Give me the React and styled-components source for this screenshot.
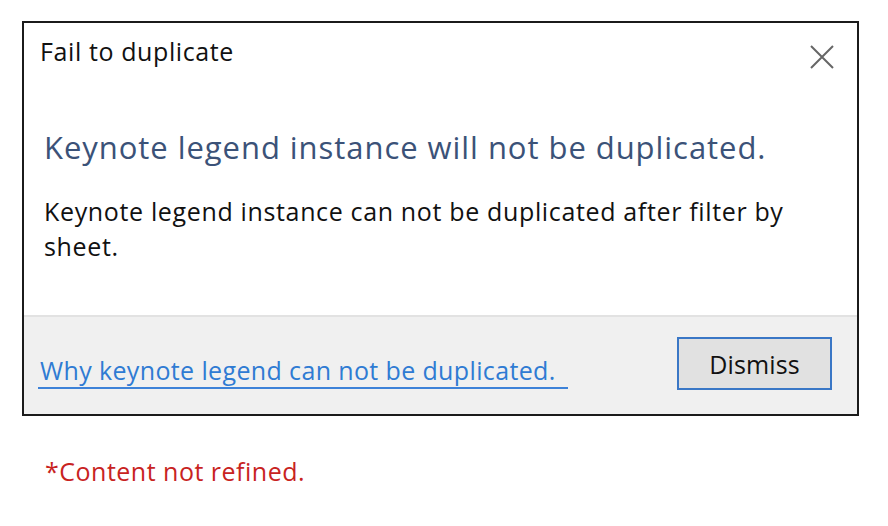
import React from "react";
import styled, { createGlobalStyle } from "styled-components";

const GlobalStyle = createGlobalStyle`
  html, body {
    margin: 0;
    padding: 0;
    background: #ffffff;
  }
  body {
    font-family: "Open Sans", "Noto Sans", "Liberation Sans", sans-serif;
  }
`;

const Page = styled.div`
  padding: 21px 0 0 22px;
  width: 888px;
  height: 526px;
  box-sizing: border-box;
`;

const Dialog = styled.div`
  width: 837px;
  height: 395px;
  box-sizing: border-box;
  border: 2px solid #1b1b1b;
  display: flex;
  flex-direction: column;
  background: #ffffff;
`;

const Header = styled.div`
  display: flex;
  align-items: flex-start;
  justify-content: space-between;
  padding: 11px 22px 0 16px;
  height: 60px;
  box-sizing: border-box;
`;

const HeaderTitle = styled.div`
  font-size: 25px;
  letter-spacing: 0.6px;
  color: #111;
  line-height: 34px;
`;

const CloseButton = styled.button`
  border: none;
  background: transparent;
  padding: 0;
  margin-top: 10px;
  width: 26px;
  height: 26px;
  cursor: pointer;
  display: flex;
  align-items: center;
  justify-content: center;
`;

const Body = styled.div`
  flex: 1;
  padding: 44px 30px 0 20px;
`;

const Headline = styled.h2`
  margin: 0;
  font-weight: 400;
  font-size: 31px;
  letter-spacing: 0.95px;
  line-height: 40px;
  color: #3b5278;
`;

const Message = styled.p`
  margin: 27px 0 0;
  font-size: 25px;
  letter-spacing: 0.65px;
  line-height: 35px;
  color: #111;
`;

const Footer = styled.div`
  height: 99px;
  box-sizing: border-box;
  border-top: 2px solid #e2e2e2;
  background: #f0f0f0;
  display: flex;
  align-items: flex-start;
  justify-content: space-between;
  padding: 20px 25px 0 14px;
`;

const HelpLink = styled.a`
  margin-top: 17px;
  display: inline-block;
  font-size: 25px;
  letter-spacing: 0.37px;
  line-height: 33px;
  color: #2f7bd3;
  text-decoration: none;
  padding: 0 12px 0 2px;
  border-bottom: 2px solid #3d82d8;
`;

const DismissButton = styled.button`
  width: 155px;
  height: 53px;
  box-sizing: border-box;
  border: 2px solid #3a77c6;
  background: #e1e1e1;
  font-family: inherit;
  font-size: 25px;
  letter-spacing: 0.1px;
  color: #111;
  cursor: pointer;
`;

const Note = styled.div`
  margin: 38px 0 0 23px;
  font-size: 25px;
  letter-spacing: 0.5px;
  color: #c8231f;
`;

const CloseIcon = () => (
  <svg width="26" height="26" viewBox="0 0 26 26">
    <path d="M2 2 L24 24 M24 2 L2 24" stroke="#666" strokeWidth="2" fill="none" />
  </svg>
);

export default function App() {
  return (
    <>
      <GlobalStyle />
      <Page>
        <Dialog>
          <Header>
            <HeaderTitle>Fail to duplicate</HeaderTitle>
            <CloseButton aria-label="Close">
              <CloseIcon />
            </CloseButton>
          </Header>
          <Body>
            <Headline>Keynote legend instance will not be duplicated.</Headline>
            <Message>
              Keynote legend instance can not be duplicated after filter by sheet.
            </Message>
          </Body>
          <Footer>
            <HelpLink href="#">Why keynote legend can not be duplicated.</HelpLink>
            <DismissButton>Dismiss</DismissButton>
          </Footer>
        </Dialog>
        <Note>*Content not refined.</Note>
      </Page>
    </>
  );
}
